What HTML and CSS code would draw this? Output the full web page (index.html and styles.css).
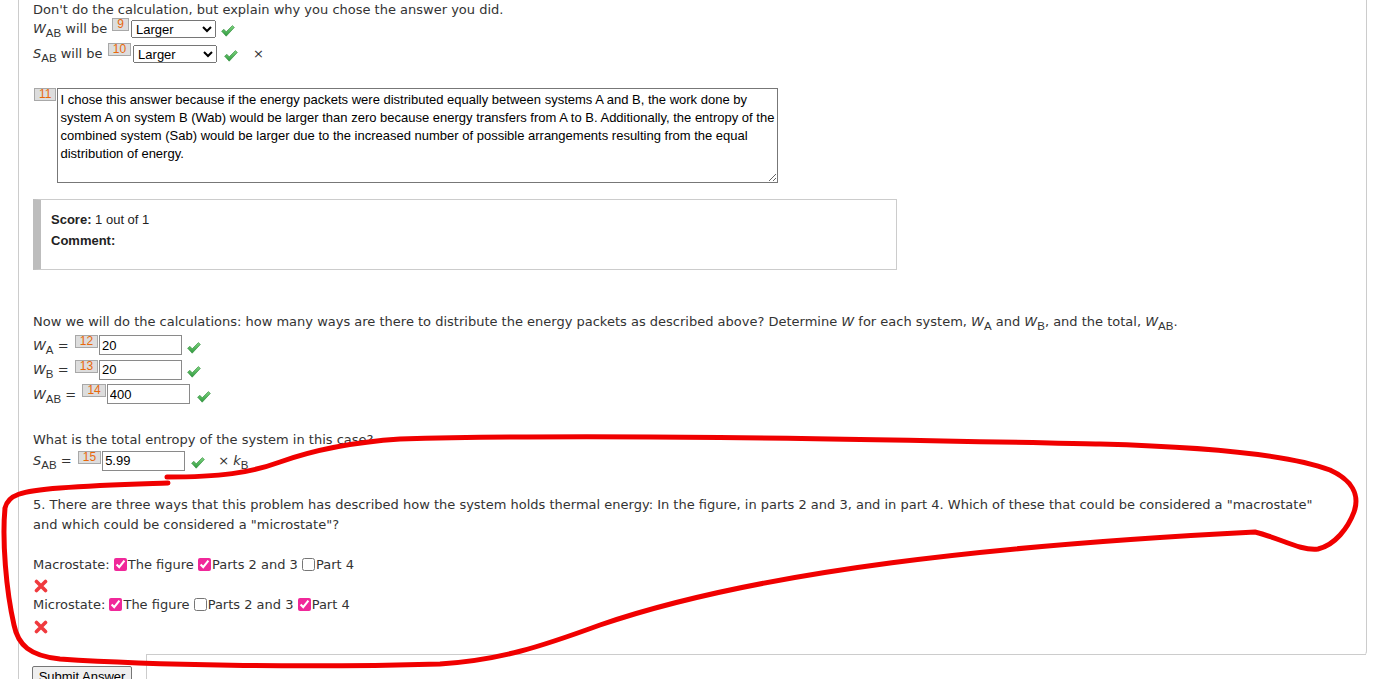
FILE: index.html
```html
<!DOCTYPE html>
<html>
<head>
<meta charset="utf-8">
<link rel="stylesheet" href="styles.css">
</head>
<body>
<div class="wrap">
  <div class="panel">
    <div class="line l-first">Don't do the calculation, but explain why you chose the answer you did.</div>
    <div class="row r-sel1">
      <span class="v"><i>W</i><sub>AB</sub></span><span class="txt">&nbsp;will be&nbsp;</span><span class="badge">9</span><select class="sel"><option>Larger</option></select>
      <svg class="ok" viewBox="0 0 14 12" width="14" height="12"><defs><linearGradient id="g1" x1="0" y1="0" x2="0" y2="1"><stop offset="0" stop-color="#7ed47e"/><stop offset="1" stop-color="#2e9a3e"/></linearGradient></defs><path d="M0.6 6.2 L2.9 4.3 L5.2 6.8 L11.4 0.6 L13.4 2.4 L5.2 11.2 Z" fill="url(#g1)" stroke="#2f8a3b" stroke-width="0.6" stroke-linejoin="round"/></svg>
    </div>
    <div class="row r-sel2">
      <span class="v"><i>S</i><sub>AB</sub></span><span class="txt">&nbsp;will be&nbsp;</span><span class="badge">10</span><select class="sel"><option>Larger</option></select>
      <svg class="ok ok2" viewBox="0 0 14 12" width="14" height="12"><path d="M0.6 6.2 L2.9 4.3 L5.2 6.8 L11.4 0.6 L13.4 2.4 L5.2 11.2 Z" fill="url(#g1)" stroke="#2f8a3b" stroke-width="0.6" stroke-linejoin="round"/></svg>
      <span class="times">×</span>
    </div>

    <div class="ta-row">
      <span class="badge b-ta">11</span>
      <textarea class="ta">I chose this answer because if the energy packets were distributed equally between systems A and B, the work done by system A on system B (Wab) would be larger than zero because energy transfers from A to B. Additionally, the entropy of the combined system (Sab) would be larger due to the increased number of possible arrangements resulting from the equal distribution of energy.</textarea>
    </div>

    <div class="score">
      <div><b>Score:</b> 1 out of 1</div>
      <div><b>Comment:</b></div>
    </div>

    <div class="line l-now">Now we will do the calculations: how many ways are there to distribute the energy packets as described above? Determine <i>W</i> for each system, <i>W</i><sub>A</sub> and <i>W</i><sub>B</sub>, and the total, <i>W</i><sub>AB</sub>.</div>
    <div class="row r-in r-first">
      <span class="v"><i>W</i><sub>A</sub></span><span class="txt">&nbsp;=&nbsp;</span><span class="badge b-in">12</span><input class="inp" value="20">
      <svg class="ok" viewBox="0 0 14 12" width="14" height="12"><path d="M0.6 6.2 L2.9 4.3 L5.2 6.8 L11.4 0.6 L13.4 2.4 L5.2 11.2 Z" fill="url(#g1)" stroke="#2f8a3b" stroke-width="0.6" stroke-linejoin="round"/></svg>
    </div>
    <div class="row r-in">
      <span class="v"><i>W</i><sub>B</sub></span><span class="txt">&nbsp;=&nbsp;</span><span class="badge b-in">13</span><input class="inp" value="20">
      <svg class="ok" viewBox="0 0 14 12" width="14" height="12"><path d="M0.6 6.2 L2.9 4.3 L5.2 6.8 L11.4 0.6 L13.4 2.4 L5.2 11.2 Z" fill="url(#g1)" stroke="#2f8a3b" stroke-width="0.6" stroke-linejoin="round"/></svg>
    </div>
    <div class="row r-in">
      <span class="v"><i>W</i><sub>AB</sub></span><span class="txt">&nbsp;=&nbsp;</span><span class="badge b-in">14</span><input class="inp" value="400">
      <svg class="ok ok3" viewBox="0 0 14 12" width="14" height="12"><path d="M0.6 6.2 L2.9 4.3 L5.2 6.8 L11.4 0.6 L13.4 2.4 L5.2 11.2 Z" fill="url(#g1)" stroke="#2f8a3b" stroke-width="0.6" stroke-linejoin="round"/></svg>
    </div>

    <div class="line l-what">What is the total entropy of the system in this case?</div>
    <div class="row r-s">
      <span class="v"><i>S</i><sub>AB</sub></span><span class="txt">&nbsp;=&nbsp;</span><span class="badge b-in">15</span><input class="inp" value="5.99">
      <svg class="ok" viewBox="0 0 14 12" width="14" height="12"><path d="M0.6 6.2 L2.9 4.3 L5.2 6.8 L11.4 0.6 L13.4 2.4 L5.2 11.2 Z" fill="url(#g1)" stroke="#2f8a3b" stroke-width="0.6" stroke-linejoin="round"/></svg>
      <span class="kb">× <i>k</i><sub>B</sub></span>
    </div>

    <div class="line l-five">5. There are three ways that this problem has described how the system holds thermal energy: In the figure, in parts 2 and 3, and in part 4. Which of these that could be considered a "macrostate" and which could be considered a "microstate"?</div>

    <div class="line l-macro">Macrostate: <label><input type="checkbox" class="cb" checked>The figure</label> <label><input type="checkbox" class="cb" checked>Parts 2 and 3</label> <label><input type="checkbox" class="cb">Part 4</label></div>
    <div class="xrow"><svg class="bad" viewBox="0 0 14 14" width="14" height="14"><path d="M2.5 2.5 L11.5 11.5 M11.5 2.5 L2.5 11.5" stroke="#f03a3e" stroke-width="3.6" stroke-linecap="round"/></svg></div>
    <div class="line l-micro">Microstate: <label><input type="checkbox" class="cb" checked>The figure</label> <label><input type="checkbox" class="cb">Parts 2 and 3</label> <label><input type="checkbox" class="cb" checked>Part 4</label></div>
    <div class="xrow xrow2"><svg class="bad" viewBox="0 0 14 14" width="14" height="14"><path d="M2.5 2.5 L11.5 11.5 M11.5 2.5 L2.5 11.5" stroke="#f03a3e" stroke-width="3.6" stroke-linecap="round"/></svg></div>
  </div>

  <div class="bottom">
    <button class="submit">Submit Answer</button>
    <div class="fbox"></div>
  </div>
</div>

<svg class="ink" width="1379" height="679" viewBox="0 0 1379 679">
  <path d="M167 477 C220 477, 250 473, 280 462 C305 453, 340 443, 400 439 C600 433, 900 440, 1100 444 C1210 447, 1290 455, 1330 470 C1352 480, 1360 495, 1354 512 C1348 528, 1335 545, 1318 549 C1300 551, 1280 538, 1255 532 C1000 545, 760 570, 600 625 C540 647, 500 660, 440 664 C300 668, 150 665, 60 659 C30 656, 18 645, 14 625 C6 590, 2 540, 5 508 C8 495, 20 491, 60 488 C100 485, 140 484, 168 483" fill="none" stroke="#f00000" stroke-width="5" stroke-linecap="round" stroke-linejoin="round"/>
</svg>
</body>
</html>
```

FILE: styles.css
```css
html, body {
  margin: 0;
  padding: 0;
  background: #fff;
}
body {
  font-family: "DejaVu Sans", Verdana, sans-serif;
  font-size: 13px;
  color: #333;
  overflow: hidden;
  height: 679px;
}
.wrap {
  margin-left: 18px;
  border-left: 1px solid #ccc;
  width: 1348px;
  min-height: 679px;
}
.panel {
  padding: 0 40px 16px 14px;
  border-right: 1px solid #ccc;
  border-bottom: 1px solid transparent;
  border-bottom-right-radius: 4px;
}
.line {
  line-height: 20px;
}
.l-first {
  height: 16px;
  line-height: 19px;
}
.row {
  display: flex;
  align-items: center;
  white-space: nowrap;
}
.r-sel1, .r-sel2 {
  height: 25px;
}
.v i, .line i, .kb i {
  font-style: italic;
}
sub {
  font-family: "Liberation Sans", Arial, sans-serif;
  font-size: 11.5px;
  vertical-align: -4px;
  line-height: 0;
}
.badge {
  display: inline-block;
  font-family: "Liberation Sans", Arial, sans-serif;
  font-size: 12px;
  line-height: 11px;
  color: #e8680c;
  background: #dddddd;
  border: 1px solid #a8a8a8;
  padding: 0 4px;
  margin: 0 2px 8px 1px;
}
.sel {
  width: 85px;
  height: 18px;
  font-family: "Liberation Sans", Arial, sans-serif;
  font-size: 13px;
  color: #000;
  padding: 0;
  margin: 0;
}
.r-sel2 .sel {
  width: 84px;
}
.ok {
  margin: 5px 0 0 5px;
  flex: none;
}
.ok2 {
  margin-left: 7px;
}
.ok3 {
  margin-left: 7px;
}
.times {
  margin-left: 15px;
  font-size: 13px;
}
.ta-row {
  display: flex;
  align-items: flex-start;
  margin-top: 22px;
}
.b-ta {
  margin: 0 1px 0 1px;
}
.ta {
  box-sizing: border-box;
  width: 721px;
  height: 95px;
  margin: 0;
  padding: 2px 2px;
  border: 1px solid #777;
  font-family: "Liberation Sans", Arial, sans-serif;
  font-size: 13px;
  line-height: 18px;
  color: #000;
  resize: both;
}
.score {
  box-sizing: border-box;
  width: 864px;
  height: 71px;
  margin-top: 16px;
  border: 1px solid #ccc;
  border-left: 8px solid #bdbdbd;
  padding: 9px 0 0 10px;
  font-family: "Liberation Sans", Arial, sans-serif;
  font-size: 13px;
  line-height: 21px;
  color: #222;
}
.l-now {
  margin-top: 42px;
}
.r-in {
  height: 24.5px;
}
.r-first {
  margin-top: 1px;
}
.b-in {
  margin: 0 1px 7px 2px;
}
.inp {
  box-sizing: border-box;
  width: 83px;
  height: 20px;
  margin: 0;
  padding: 0 2px;
  border: 1px solid #8a8a8a;
  font-family: "Liberation Sans", Arial, sans-serif;
  font-size: 13px;
  color: #000;
}
.l-what {
  margin-top: 23px;
}
.r-s {
  height: 22px;
}
.r-s .ok {
  margin-left: 6px;
}
.kb {
  margin-left: 13px;
}
.l-five {
  margin-top: 23px;
}
.l-macro {
  margin-top: 20px;
}
.cb {
  width: 13px;
  height: 13px;
  margin: 0 1px 0 0;
  vertical-align: -2px;
  accent-color: #f0289a;
}
.xrow {
  height: 20px;
  display: flex;
  align-items: center;
  padding-top: 1px;
}
.l-micro {
  margin-top: -1px;
}
.xrow2 {
  height: 22px;
}
.bad {
  margin-left: 1px;
}
.bottom {
  display: flex;
  align-items: flex-start;
}
.submit {
  margin: 11px 0 0 13px;
  width: 100px;
  height: 21px;
  padding: 0;
  font-family: "Liberation Sans", Arial, sans-serif;
  font-size: 13px;
  color: #000;
  background: #efefef;
  border: 1px solid #767676;
  border-radius: 2px;
}
.fbox {
  flex: 1;
  margin-left: 14px;
  height: 40px;
  border-top: 1px solid #ccc;
  border-left: 1px solid #ccc;
  margin-top: -1px;
  margin-right: 1px;
}
.ink {
  position: absolute;
  left: 0;
  top: 0;
  pointer-events: none;
}
```
